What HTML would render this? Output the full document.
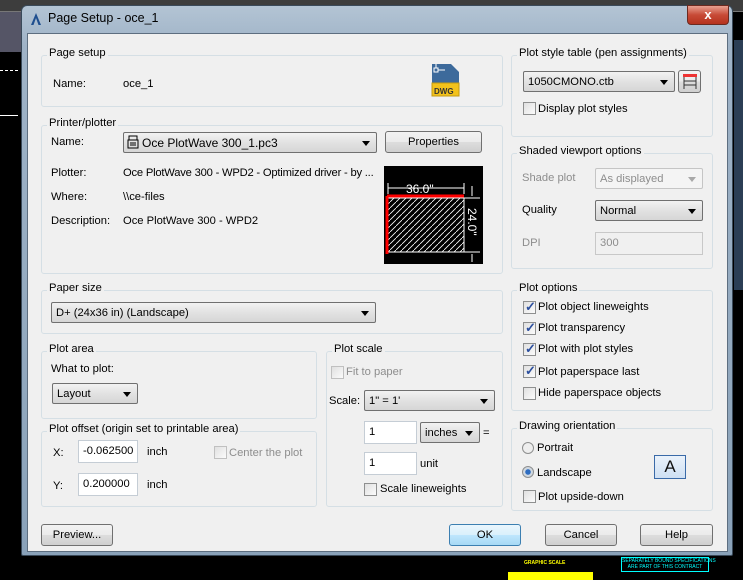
<!DOCTYPE html>
<html><head><meta charset="utf-8"><style>
*{box-sizing:border-box;margin:0;padding:0}
body{width:743px;height:580px;background:#000;position:relative;overflow:hidden;font-family:"Liberation Sans",sans-serif;font-size:11.2px;color:#000}
.a{position:absolute;white-space:nowrap}
.win{position:absolute;left:21px;top:5px;width:712px;height:551px;border:1px solid #3a4a5a;border-radius:6px 6px 2px 2px;background:linear-gradient(#b3c4d4,#9fb3c7 40px,#8aa2b9);}
.client{position:absolute;left:27px;top:33px;width:701px;height:519px;background:#f0f0f0;border:1px solid #5d6e80}
.g{position:absolute;border:1px solid #d5dfe5;border-radius:3px}
.gl{position:absolute;background:#f0f0f0;padding:0 2px;top:-9px;left:5px;white-space:nowrap}
.dd{position:absolute;height:21px;border:1px solid #707070;border-radius:2px;background:linear-gradient(#f2f2f2,#e2e2e2 50%,#d6d6d6);padding:4px 4px 0;white-space:nowrap}
.dd:after{content:"";position:absolute;right:6px;top:8px;border-left:4px solid transparent;border-right:4px solid transparent;border-top:5px solid #000}
.dis{color:#8d8d8d}
.dd.dis{border-color:#c5c5c5;background:#f4f4f4}
.dd.dis:after{border-top-color:#a8a8a8}
.btn{position:absolute;height:22px;border:1px solid #707070;border-radius:3px;background:linear-gradient(#f2f2f2,#ebebeb 50%,#dddddd 51%,#cfcfcf);text-align:center;line-height:20px}
.tb{position:absolute;height:23px;background:#fff;border:1px solid #c5cdd5;padding:4px 4px 0}
.cb{position:absolute;width:13px;height:13px;border:1px solid #8e8f8f;background:linear-gradient(135deg,#e0e0e0,#fbfbfb)}
.ck:after{content:"✓";position:absolute;left:1px;top:-3px;font-size:13px;color:#2c4f9e;font-weight:bold}
.lbl{position:absolute;white-space:nowrap}
</style></head><body>
<div class="a" style="left:0;top:0;width:743px;height:12px;background:#3d3d3d;border-bottom:1px solid #777"></div>
<div class="a" style="left:0;top:12px;width:22px;height:40px;background:#556;"></div>
<div class="a" style="left:0;top:70px;width:18px;border-top:1px dashed #fff"></div>
<div class="a" style="left:0;top:115px;width:18px;border-top:1px solid #fff"></div>
<div class="a" style="left:734px;top:40px;width:9px;height:250px;background:#2b3e55"></div>
<div class="a" style="left:524px;top:560px;width:52px;height:6px;color:#ff0;font-size:5px;font-weight:bold">GRAPHIC SCALE</div>
<div class="a" style="left:508px;top:572px;width:85px;height:8px;background:#ff0"></div>
<div class="a" style="left:621px;top:557px;width:88px;height:15px;border:1px solid #0ff;color:#0ff;font-size:5px;text-align:center;line-height:6px">SEPARATELY BOUND SPECIFICATIONS<br>ARE PART OF THIS CONTRACT</div>

<div class="win">
 <div class="a" style="left:665px;top:-1px;width:42px;height:20px;border:1px solid #6b2a20;border-radius:0 0 4px 4px;background:linear-gradient(#e8a090,#c74a36 50%,#b5321e);color:#fff;font-weight:bold;text-align:center;line-height:18px;font-size:13px">x</div>
</div>
<svg class="a" style="left:29px;top:12px" width="14" height="14" viewBox="0 0 14 14"><path d="M7 1 L12 13 L9.5 13 L7 6 L4.5 13 L2 13 Z" fill="#1f4f8f"/></svg>
<div class="a" style="left:48px;top:11px;font-size:12.5px;color:#000">Page Setup - oce_1</div>

<div class="client"></div>

<!-- Page setup -->
<div class="g" style="left:41px;top:55px;width:462px;height:52px"><span class="gl">Page setup</span></div>
<div class="lbl" style="left:53px;top:78px">Name:</div>
<div class="lbl" style="left:123px;top:78px">oce_1</div>
<svg class="a" style="left:431px;top:63px" width="30" height="34"><path d="M1 1H20L28 9V20H1Z" fill="#3d6a9b"/><path d="M1 20H28V33H1Z" fill="#f3c21b" stroke="#c39a10"/><rect x="3" y="5" width="4" height="4" fill="none" stroke="#fff"/><path d="M5 1V5M7 7H14" stroke="#fff"/><text x="3" y="31" font-size="8" font-weight="bold" fill="#333" font-family="Liberation Sans">DWG</text></svg>

<!-- Printer/plotter -->
<div class="g" style="left:41px;top:125px;width:462px;height:149px"><span class="gl">Printer/plotter</span></div>
<div class="lbl" style="left:51px;top:136px">Name:</div>
<div class="dd" style="left:123px;top:132px;width:254px;padding-left:18px;font-size:12px;padding-top:3px">Oce PlotWave 300_1.pc3</div>
<svg class="a" style="left:127px;top:135px" width="12" height="14"><path d="M2 1h8v4H2zM1 5h10v8H1zM3 8h6M3 10h6" fill="none" stroke="#000"/></svg>
<div class="btn" style="left:385px;top:131px;width:97px">Properties</div>
<div class="lbl" style="left:51px;top:167px">Plotter:</div>
<div class="lbl" style="left:123px;top:167px;letter-spacing:-0.2px">Oce PlotWave 300 - WPD2 - Optimized driver - by ...</div>
<div class="lbl" style="left:51px;top:191px">Where:</div>
<div class="lbl" style="left:123px;top:191px">\\ce-files</div>
<div class="lbl" style="left:51px;top:215px">Description:</div>
<div class="lbl" style="left:123px;top:215px">Oce PlotWave 300 - WPD2</div>
<svg class="a" style="left:384px;top:166px" width="99" height="98" viewBox="0 0 99 98">
<rect width="99" height="98" fill="#000"/>
<defs><pattern id="h" width="6" height="6" patternUnits="userSpaceOnUse"><path d="M0 6L6 0" stroke="#fff" stroke-width="0.8"/></pattern></defs>
<rect x="3" y="32" width="77" height="54" fill="url(#h)" stroke="#fff"/>
<path d="M3 30H80M3 30V88" stroke="#f00" stroke-width="3"/>
<path d="M4 22H80M4 17V28M80 17V28" stroke="#fff"/>
<path d="M80 32H96M80 86H96M88 20V30M88 88V96" stroke="#fff"/>
<text x="22" y="27" fill="#fff" font-size="12" font-family="Liberation Sans">36.0"</text>
<text x="84" y="42" fill="#fff" font-size="12" font-family="Liberation Sans" transform="rotate(90 84 42)">24.0"</text>
</svg>

<!-- Paper size -->
<div class="g" style="left:41px;top:290px;width:462px;height:44px"><span class="gl">Paper size</span></div>
<div class="dd" style="left:51px;top:302px;width:325px">D+ (24x36 in) (Landscape)</div>

<!-- Plot area -->
<div class="g" style="left:41px;top:351px;width:276px;height:68px"><span class="gl">Plot area</span></div>
<div class="lbl" style="left:51px;top:363px">What to plot:</div>
<div class="dd" style="left:52px;top:383px;width:86px">Layout</div>

<!-- Plot offset -->
<div class="g" style="left:41px;top:431px;width:276px;height:76px"><span class="gl">Plot offset (origin set to printable area)</span></div>
<div class="lbl" style="left:53px;top:447px">X:</div>
<div class="tb" style="left:78px;top:440px;width:60px">-0.062500</div>
<div class="lbl" style="left:147px;top:446px">inch</div>
<div class="cb" style="left:214px;top:446px;border-color:#c0c0c0"></div>
<div class="lbl dis" style="left:229px;top:447px">Center the plot</div>
<div class="lbl" style="left:53px;top:480px">Y:</div>
<div class="tb" style="left:78px;top:473px;width:60px">0.200000</div>
<div class="lbl" style="left:147px;top:479px">inch</div>

<!-- Plot scale -->
<div class="g" style="left:326px;top:351px;width:177px;height:156px"><span class="gl">Plot scale</span></div>
<div class="cb" style="left:331px;top:366px;border-color:#c0c0c0"></div>
<div class="lbl dis" style="left:346px;top:366px">Fit to paper</div>
<div class="lbl" style="left:329px;top:395px">Scale:</div>
<div class="dd" style="left:364px;top:390px;width:131px">1" = 1'</div>
<div class="tb" style="left:364px;top:421px;width:53px">1</div>
<div class="dd" style="left:420px;top:422px;width:60px">inches</div>
<div class="lbl" style="left:483px;top:427px">=</div>
<div class="tb" style="left:364px;top:452px;width:53px">1</div>
<div class="lbl" style="left:420px;top:458px">unit</div>
<div class="cb" style="left:364px;top:483px"></div>
<div class="lbl" style="left:380px;top:483px">Scale lineweights</div>

<!-- Plot style table -->
<div class="g" style="left:511px;top:55px;width:202px;height:82px"><span class="gl">Plot style table (pen assignments)</span></div>
<div class="dd" style="left:523px;top:71px;width:152px">1050CMONO.ctb</div>
<div class="btn" style="left:678px;top:70px;width:23px;height:23px"></div>
<svg class="a" style="left:682px;top:73px" width="16" height="17"><rect x="1" y="1" width="14" height="3" fill="#e33"/><path d="M2 4V16M14 4V16M2 8H14M2 12H14" stroke="#333" fill="none"/></svg>
<div class="cb" style="left:523px;top:102px"></div>
<div class="lbl" style="left:538px;top:103px">Display plot styles</div>

<!-- Shaded viewport -->
<div class="g" style="left:511px;top:153px;width:202px;height:116px"><span class="gl">Shaded viewport options</span></div>
<div class="lbl dis" style="left:522px;top:172px">Shade plot</div>
<div class="dd dis" style="left:595px;top:168px;width:108px;color:#8d8d8d">As displayed</div>
<div class="lbl" style="left:522px;top:204px">Quality</div>
<div class="dd" style="left:595px;top:200px;width:108px">Normal</div>
<div class="lbl dis" style="left:522px;top:237px">DPI</div>
<div class="tb dis" style="left:595px;top:232px;width:108px;background:#f0f0f0;border-color:#c8c8c8">300</div>

<!-- Plot options -->
<div class="g" style="left:511px;top:290px;width:202px;height:121px"><span class="gl">Plot options</span></div>
<div class="cb ck" style="left:523px;top:301px"></div><div class="lbl" style="left:538px;top:301px">Plot object lineweights</div>
<div class="cb ck" style="left:523px;top:322px"></div><div class="lbl" style="left:538px;top:322px">Plot transparency</div>
<div class="cb ck" style="left:523px;top:343px"></div><div class="lbl" style="left:538px;top:343px">Plot with plot styles</div>
<div class="cb ck" style="left:523px;top:365px"></div><div class="lbl" style="left:538px;top:366px">Plot paperspace last</div>
<div class="cb" style="left:523px;top:387px"></div><div class="lbl" style="left:538px;top:387px">Hide paperspace objects</div>

<!-- Drawing orientation -->
<div class="g" style="left:511px;top:428px;width:202px;height:83px"><span class="gl">Drawing orientation</span></div>
<div class="a" style="left:522px;top:442px;width:12px;height:12px;border-radius:50%;border:1px solid #8e8f8f;background:#eee"></div>
<div class="lbl" style="left:537px;top:442px">Portrait</div>
<div class="a" style="left:522px;top:466px;width:12px;height:12px;border-radius:50%;border:1px solid #8e8f8f;background:radial-gradient(#2d6cc0 0 2.5px,#d0d8e0 3px)"></div>
<div class="lbl" style="left:537px;top:467px">Landscape</div>
<div class="cb" style="left:523px;top:490px"></div><div class="lbl" style="left:538px;top:491px">Plot upside-down</div>
<div class="a" style="left:654px;top:455px;width:32px;height:24px;border:1px solid #3a6aa8;background:linear-gradient(#eaf2fb,#cfe0f3);font-size:17px;text-align:center;line-height:22px;color:#111">A</div>

<!-- Buttons -->
<div class="btn" style="left:41px;top:524px;width:72px">Preview...</div>
<div class="btn" style="left:449px;top:524px;width:72px;border-color:#3c7fb1;background:linear-gradient(#eaf6fd,#d9f0fc 50%,#bee6fd 51%,#a7d9f5)">OK</div>
<div class="btn" style="left:545px;top:524px;width:72px">Cancel</div>
<div class="btn" style="left:640px;top:524px;width:73px">Help</div>
</body></html>
